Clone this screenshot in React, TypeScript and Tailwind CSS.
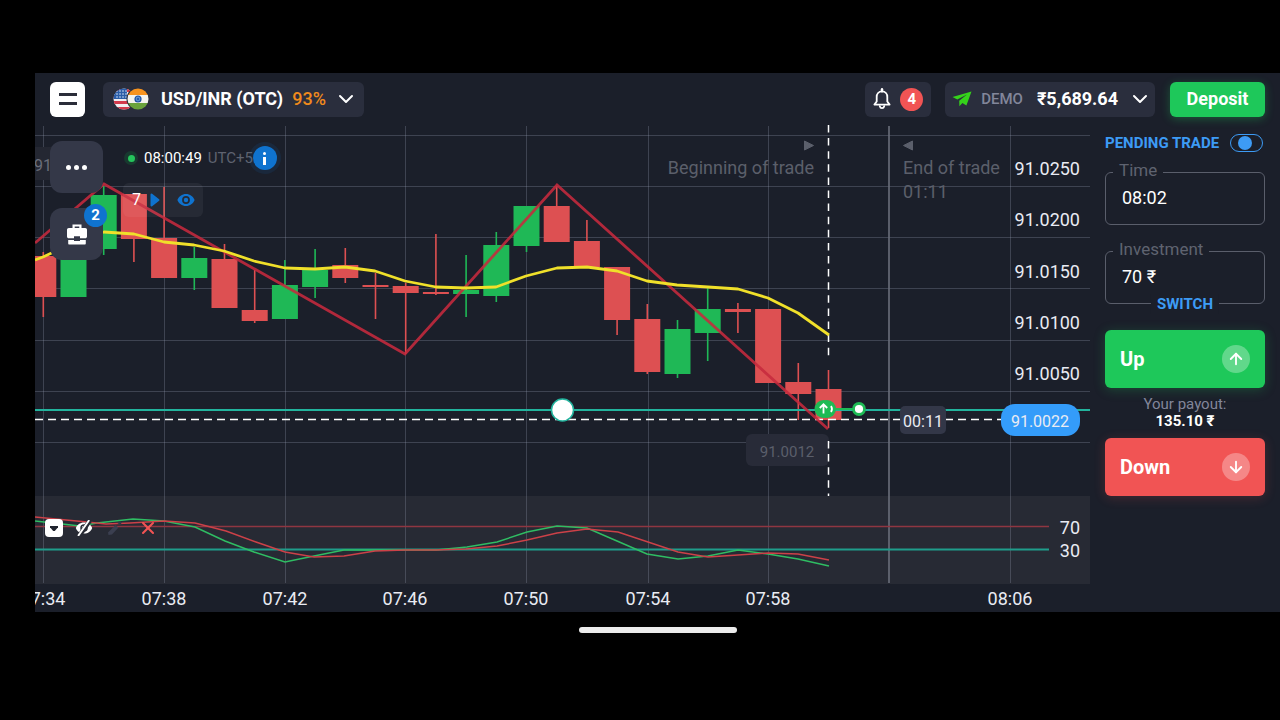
import { ArrowDown, ArrowUp, ChevronDown, X } from "lucide-react"

type Candle = { up?: boolean; high: number; top: number; bottom: number; low: number }

const STEP = 30.2
const FIRST_X = 43.3

const candles: Candle[] = [
    { high: 252, top: 256, bottom: 297, low: 317 },
    { up: true, high: 240, top: 252, bottom: 297, low: 297 },
    { up: true, high: 186, top: 195, bottom: 249, low: 255 },
    { high: 194, top: 194, bottom: 239, low: 262 },
    { high: 187, top: 238, bottom: 278, low: 278 },
    { up: true, high: 247, top: 258, bottom: 278, low: 290 },
    { high: 244, top: 259, bottom: 308, low: 308 },
    { high: 270, top: 310, bottom: 321, low: 323 },
    { up: true, high: 260, top: 285, bottom: 319, low: 319 },
    { up: true, high: 249, top: 270, bottom: 287, low: 298 },
    { high: 248, top: 265, bottom: 278, low: 283 },
    { high: 273, top: 285, bottom: 287, low: 319 },
    { high: 283, top: 286, bottom: 293, low: 354 },
    { high: 234, top: 292, bottom: 294, low: 295 },
    { up: true, high: 255, top: 290, bottom: 294, low: 317 },
    { up: true, high: 232, top: 245, bottom: 296, low: 302 },
    { up: true, high: 206, top: 206, bottom: 246, low: 252 },
    { high: 186, top: 206, bottom: 242, low: 242 },
    { high: 220, top: 241, bottom: 267, low: 267 },
    { high: 267, top: 267, bottom: 320, low: 335 },
    { high: 304, top: 319, bottom: 372, low: 374 },
    { up: true, high: 320, top: 329, bottom: 374, low: 378 },
    { up: true, high: 286, top: 309, bottom: 333, low: 361 },
    { high: 303, top: 309, bottom: 312, low: 333 },
    { high: 309, top: 309, bottom: 383, low: 383 },
    { high: 363, top: 382, bottom: 394, low: 420 },
    { high: 370, top: 389, bottom: 420, low: 428 },
]

const average =
    "35,260 43,257 73,243 104,232 134,234 164,242 194,245 224,251 254,261 285,268 315,269 345,267 375,271 405,281 436,287 466,288 496,287 526,276 557,268 587,267 617,271 647,281 677,285 708,287 738,289 768,298 798,313 829,335"

const stochFast =
    "35,521 80,526 97,523 133,519 164,521 195,527 225,541 254,552 285,562 314,556 344,550 436,550 467,547 497,542 527,532 557,526 587,528 617,541 647,554 678,559 708,556 738,550 768,554 798,559 829,566"

const stochSlow =
    "35,517 87,522 106,524 130,523 164,521 195,523 226,531 256,542 285,552 314,557 344,556 375,551 405,550 436,550 466,549 497,546 527,540 557,533 587,529 618,532 648,542 678,552 708,557 738,555 768,553 798,554 829,560"

const rows = [135, 186, 237, 288, 340, 391, 442]

const columns = [
    { x: 43, label: "07:34" },
    { x: 164, label: "07:38" },
    { x: 285, label: "07:42" },
    { x: 405, label: "07:46" },
    { x: 526, label: "07:50" },
    { x: 648, label: "07:54" },
    { x: 768, label: "07:58" },
    { x: 1010, label: "08:06" },
]

const prices = [
    { y: 168, label: "91.0250" },
    { y: 219, label: "91.0200" },
    { y: 271, label: "91.0150" },
    { y: 322, label: "91.0100" },
    { y: 373, label: "91.0050" },
]

function Flags() {
    return (
        <svg viewBox="0 0 36 22" className="h-[22px] w-9" aria-hidden="true">
            <defs>
                <clipPath id="us">
                    <circle cx="11" cy="11" r="10.5" />
                </clipPath>
                <clipPath id="in">
                    <circle cx="25" cy="11" r="10.5" />
                </clipPath>
            </defs>
            <g clipPath="url(#us)">
                <rect width="22" height="22" fill="#f1eef0" />
                {[0, 6, 12, 18].map((y) => (
                    <rect key={y} y={y + 1} width="22" height="3" fill="#d33a4c" />
                ))}
                <rect width="14" height="11" fill="#2a5da8" />
                {[3, 6, 9].map((y) =>
                    [4, 7, 10, 13].map((x) => <circle key={`${x}-${y}`} cx={x} cy={y} r="0.8" fill="#d8e4f5" />)
                )}
            </g>
            <circle cx="25" cy="11" r="11.5" fill="#2a2e3d" />
            <g clipPath="url(#in)">
                <rect x="14" width="22" height="7" fill="#f7931e" />
                <rect x="14" y="7" width="22" height="8" fill="#f3f3ee" />
                <rect x="14" y="15" width="22" height="7" fill="#6aa33c" />
            </g>
            <circle cx="25" cy="11" r="3" fill="#5c8fd0" stroke="#1c4fa0" strokeWidth="1.2" />
            <circle cx="25" cy="11" r="1" fill="#1c4fa0" />
        </svg>
    )
}

function Bell() {
    return (
        <svg viewBox="0 0 18 22" className="h-[22px] w-[18px]" fill="none" stroke="#fff" strokeWidth="1.8" strokeLinejoin="round" strokeLinecap="round" aria-hidden="true">
            <path d="M9 3.400c-3.400 0-5.300 2.500-5.300 5.500v4.600L1.400 16.600h15.200l-2.300-3.100V8.900c0-3-1.900-5.500-5.300-5.500z" />
            <path d="M9 1.300v2" strokeWidth="2.400" />
            <path d="M6.800 18.200c.3 1.300 1.100 1.900 2.200 1.900s1.900-.6 2.200-1.900" />
        </svg>
    )
}

function PaperPlane() {
    return (
        <svg viewBox="0 0 20 16" className="h-4 w-5" aria-hidden="true">
            <path d="M19.500.5L.5 6l4.800 2.600L15 3.500 7.200 9.800l.2 5.400 3-3.300 4 2.700z" fill="#35d21b" />
        </svg>
    )
}

function Briefcase() {
    return (
        <svg viewBox="0 0 22 22" className="h-[22px] w-[22px]" aria-hidden="true">
            <path d="M6.500 5V1.500h9V5h3.700C20.200 5 21 5.800 21 6.800v6.700c0 1-.8 1.800-1.800 1.800H14v-2.100H8v2.100H2.800c-1 0-1.800-.8-1.800-1.800V6.800C1 5.800 1.800 5 2.800 5zM8.700 5h4.600V3.500H8.700z" fill="#fff" fillRule="evenodd" />
            <path d="M2.200 17H8v1h6v-1h5.800v3.500c0 .5-.4 1-1 1H3.200c-.6 0-1-.5-1-1z" fill="#fff" />
        </svg>
    )
}

function Eye({ className }: { className: string }) {
    return (
        <svg viewBox="0 0 18 14" className={className} aria-hidden="true">
            <path d="M9 1C5 1 1.800 3.400.4 7c1.400 3.600 4.600 6 8.600 6s7.200-2.400 8.600-6C16.200 3.400 13 1 9 1zm0 9.900A3.900 3.900 0 1 1 9 3.100a3.900 3.900 0 0 1 0 7.800z" fill="currentColor" />
            <circle cx="9" cy="7" r="2.200" fill="currentColor" />
        </svg>
    )
}

function EyeOff() {
    return (
        <svg viewBox="0 0 18 16" className="h-4 w-[18px]" aria-hidden="true">
            <path d="M9 2.400C5 2.400 2 4.700.8 8 2 11.300 5 13.600 9 13.600s7-2.300 8.200-5.600C16 4.700 13 2.400 9 2.400z" fill="#fff" />
            <circle cx="9" cy="8" r="3" fill="none" stroke="#272a34" strokeWidth="1.500" />
            <path d="M15 .5L4.500 15.500" stroke="#272a34" strokeWidth="4.500" />
            <path d="M13.700.8L3.600 15.200" stroke="#fff" strokeWidth="2" strokeLinecap="round" />
        </svg>
    )
}

function Header() {
    return (
        <header className="flex h-[52px] items-center px-[15px]">
            <button aria-label="Menu" className="flex h-[35px] w-[35px] flex-col items-center justify-center gap-[6px] rounded-md bg-white">
                <span className="h-[3px] w-[18px] bg-[#2a2d39]" />
                <span className="h-[3px] w-[18px] bg-[#2a2d39]" />
            </button>
            <button className="ml-[18px] flex h-[35px] items-center rounded-md bg-[#2a2e3d] pl-[10px] pr-[6px]">
                <Flags />
                <span className="ml-3 text-[18px] leading-5 font-bold">USD/INR (OTC)</span>
                <span className="ml-[9px] text-[18px] leading-5 font-medium text-[#f08a1c]">93%</span>
                <ChevronDown className="ml-2 h-6 w-6" />
            </button>

            <button aria-label="Notifications" className="ml-auto flex h-[35px] items-center gap-[9px] rounded-md bg-[#2a2e3d] px-2">
                <Bell />
                <span className="flex h-[23px] w-[23px] items-center justify-center rounded-full bg-[#f15454] text-[15px] font-bold">4</span>
            </button>
            <button className="ml-[14px] flex h-[35px] items-center rounded-md bg-[#2a2e3d] pl-[7px] pr-[3px]">
                <PaperPlane />
                <span className="ml-[9px] text-[15px] leading-5 font-medium text-[#82869a]">DEMO</span>
                <span className="ml-[14px] text-[18px] leading-5 font-bold">₹5,689.64</span>
                <ChevronDown className="ml-[10px] h-6 w-6" />
            </button>
            <button className="ml-[15px] h-[35px] w-[95px] rounded-md bg-[#1ec85a] text-[18px] leading-5 font-bold shadow-[0_2px_10px_#1ec85a55]">
                Deposit
            </button>
        </header>
    )
}

function PriceChart() {
    return (
        <svg viewBox="35 125 1055 487" className="block w-full" role="img" aria-label="USD/INR chart" fontSize="18" fill="#e9ebf3">
            <rect x="35" y="496" width="1055" height="88" fill="#272a34" />

            {/* Grid */}
            <g stroke="#9aa2b8" strokeOpacity="0.28">
                {rows.map((y) => (
                    <line key={y} x1="35" x2="1090" y1={y + 0.5} y2={y + 0.5} />
                ))}
                {columns.map(({ x }) => (
                    <line key={x} x1={x + 0.5} x2={x + 0.5} y1="126" y2="583" />
                ))}
            </g>
            <line x1="889" x2="889" y1="126" y2="583" stroke="#6a6e7a" strokeWidth="2" strokeOpacity="0.8" />

            {/* Trade hints */}
            <g fill="#5b5f6b">
                <path d="M804.500 141l9 4.500-9 4.500z" stroke="#5b5f6b" strokeLinejoin="round" />
                <path d="M912.500 141l-9 4.500 9 4.500z" stroke="#5b5f6b" strokeLinejoin="round" />
                <text x="814" y="174" textAnchor="end">Beginning of trade</text>
                <text x="903" y="174">End of trade</text>
                <text x="903" y="198">01:11</text>
            </g>
            <rect x="746" y="434" width="83" height="32" rx="6" fill="#282b38" />
            <text x="787" y="457" fontSize="15" textAnchor="middle" fill="#5b5f6b">91.0012</text>
            <rect x="30" y="147" width="60" height="33" rx="6" fill="#242732" />
            <text x="34" y="171" fontSize="16" fill="#6a6e7a">91.0263</text>

            <path d="M828.500 125V357M828.500 441V496" stroke="#fff" strokeWidth="1.500" strokeDasharray="7.500 5.600" />

            {/* Candles */}
            {candles.map((c, i) => {
                const x = FIRST_X + i * STEP
                return (
                    <g key={i} fill={c.up ? "#1fb856" : "#dd5052"}>
                        <rect x={x - 0.8} y={c.high} width="1.6" height={c.low - c.high} />
                        <rect x={x - 13} y={c.top} width="26" height={c.bottom - c.top} />
                    </g>
                )
            })}

            <path d="M35 419.500H1001" stroke="#fff" strokeWidth="1.500" strokeDasharray="8 5" />
            <path d="M35 410H1090" stroke="#22b39d" strokeWidth="1.800" />
            <polyline points="35,243 104,184 405,354 557,185 828,429" fill="none" stroke="#c62a3e" strokeOpacity="0.88" strokeWidth="2.800" />
            <polyline points={average} fill="none" stroke="#f0e02a" strokeWidth="2.800" strokeLinejoin="round" />

            {/* Open trade */}
            <circle cx="562.500" cy="410" r="11" fill="#fff" stroke="#22b39d" strokeWidth="1.500" />
            <path d="M834 409H854" stroke="#1ebb55" strokeWidth="2" />
            <circle cx="827" cy="409" r="9" fill="#1ebb55" />
            <circle cx="823.500" cy="409" r="9" fill="#1ebb55" />
            <path d="M823.500 413.500v-9M819.800 408l3.700-3.700 3.700 3.700M831 406c1.300 2 1.300 4 0 6" fill="none" stroke="#fff" strokeWidth="1.800" />
            <circle cx="859" cy="409" r="5.500" fill="#fff" stroke="#1ebb55" strokeWidth="2.800" />
            <rect x="900" y="406" width="46" height="28" rx="5" fill="#333748" />
            <text x="923" y="427" fontSize="16" textAnchor="middle">00:11</text>
            <rect x="1001" y="404" width="79" height="32" rx="14" fill="#349cfa" />
            <text x="1040" y="427" fontSize="16" textAnchor="middle">91.0022</text>

            {/* Oscillator */}
            <path d="M35 526.500H1049" stroke="#8f3641" strokeWidth="1.500" />
            <path d="M35 549.500H1049" stroke="#1f9d8b" strokeWidth="1.800" />
            <polyline points={stochFast} fill="none" stroke="#2fbd63" strokeWidth="1.500" />
            <polyline points={stochSlow} fill="none" stroke="#cc4148" strokeWidth="1.500" />

            {/* Axis labels */}
            {prices.map(({ y, label }) => (
                <text key={label} x="1080" y={y + 7} textAnchor="end">{label}</text>
            ))}
            <text x="1080" y="534" textAnchor="end">70</text>
            <text x="1080" y="557" textAnchor="end">30</text>
            {columns.map(({ x, label }) => (
                <text key={label} x={x} y="605" textAnchor="middle">{label}</text>
            ))}
        </svg>
    )
}

function ChartTools() {
    return (
        <>
            <div className="absolute left-[15px] top-4 flex flex-col gap-[15px]">
                <button aria-label="More" className="flex h-[52px] w-[53px] items-center justify-center gap-[3px] rounded-xl bg-[#343848]">
                    <span className="h-[5px] w-[5px] rounded-full bg-white" />
                    <span className="h-[5px] w-[5px] rounded-full bg-white" />
                    <span className="h-[5px] w-[5px] rounded-full bg-white" />
                </button>
                <button aria-label="Trades" className="relative flex h-[52px] w-[53px] items-center justify-center rounded-xl bg-[#343848]">
                    <Briefcase />
                    <span className="absolute -right-1 -top-1 flex h-[23px] w-[23px] items-center justify-center rounded-full bg-[#0f73cf] text-[15px] font-bold">2</span>
                </button>
            </div>

            <div className="absolute left-[89px] top-[21px] flex h-6 items-center text-[15px]">
                <span className="flex h-[14px] w-[14px] items-center justify-center rounded-full bg-[#18392f]">
                    <span className="h-[7px] w-[7px] rounded-full bg-[#25c45c]" />
                </span>
                <span className="ml-[6px]">08:00:49</span>
                <span className="ml-[6px] whitespace-nowrap text-[#5f6370]">UTC+5:</span>
                <button aria-label="Info" className="-ml-1 flex h-6 w-6 flex-col items-center justify-center gap-[2px] rounded-full bg-[#0f73cf] shadow-[0_0_0_4px_#0f73cf1c]">
                    <span className="h-[3px] w-[3px] rounded-full bg-white" />
                    <span className="h-2 w-[3px] bg-white" />
                </button>
            </div>

            <div className="absolute left-[88px] top-[58px] flex h-[34px] w-20 items-center rounded-md bg-white/5 pl-[9px] text-[16px] text-[#0f73cf]">
                <span className="text-white">7</span>
                <svg viewBox="0 0 10 14" className="ml-[9px] h-[14px] w-[10px] shrink-0" aria-hidden="true">
                    <path d="M1.500 1.500l7 5.500-7 5.500z" fill="currentColor" stroke="currentColor" strokeWidth="2" strokeLinejoin="round" />
                </svg>
                <button aria-label="Toggle indicator" className="ml-[17px]">
                    <Eye className="h-[14px] w-[18px]" />
                </button>
            </div>

            <div className="absolute left-[10px] top-[394px] flex h-[18px] items-center">
                <button aria-label="Collapse" className="flex h-[18px] w-[18px] items-center justify-center rounded bg-white">
                    <svg viewBox="0 0 8 5" className="h-[5px] w-2" aria-hidden="true">
                        <path d="M0 0h8v1.200L4.800 5H3.200L0 1.200z" fill="#20232e" />
                    </svg>
                </button>
                <button aria-label="Hide" className="ml-3">
                    <EyeOff />
                </button>
                <button aria-label="Edit" className="ml-[14px]">
                    <svg viewBox="0 0 16 16" className="h-4 w-4" aria-hidden="true">
                        <path d="M1 12.500L8.500 5l3 2.500L5 14.500 1.500 15z" fill="#3b3f50" />
                        <path d="M10.500 3l1.500-1.500 3 1L13 5z" fill="#343848" />
                    </svg>
                </button>
                <button aria-label="Remove" className="ml-[15px]">
                    <X className="h-5 w-5 text-[#f15454]" strokeWidth={2.5} />
                </button>
            </div>
        </>
    )
}

function Field({ id, label, value }: { id: string; label: string; value: string }) {
    return (
        <div className="relative">
            <label htmlFor={id} className="absolute -top-3 left-2 bg-[#1b1f2a] px-[6px] text-[17px] leading-5 text-[#5f6370]">
                {label}
            </label>
            <input id={id} defaultValue={value} className="block h-[53px] w-full rounded-md border border-[#5a5e6b] bg-transparent px-4 pb-[3px] text-[18px] outline-none" />
        </div>
    )
}

function TradePanel() {
    return (
        <aside className="w-[190px] shrink-0 px-[15px] pt-2">
            <label className="flex h-5 items-center justify-between pr-[2px] text-[15px] font-bold text-[#3d9bf5]">
                PENDING TRADE
                <input
                    type="checkbox"
                    className="relative h-[18px] w-[33px] appearance-none rounded-full border border-[#3d9bf5] before:absolute before:left-[7px] before:top-[1px] before:h-[14px] before:w-[14px] before:rounded-full before:bg-[#3d9bf5]"
                />
            </label>

            <div className="mt-[19px]">
                <Field id="time" label="Time" value="08:02" />
            </div>
            <div className="relative mt-[26px]">
                <Field id="investment" label="Investment" value="70 ₹" />
                <button className="absolute -bottom-[10px] left-1/2 -translate-x-1/2 bg-[#1b1f2a] px-[6px] text-[15px] font-bold leading-5 text-[#3d9bf5]">
                    SWITCH
                </button>
            </div>

            <button className="mt-[26px] flex h-[58px] w-full items-center justify-between rounded-md bg-[#1ec85a] px-[15px] text-[20px] font-bold shadow-[0_2px_12px_#1ec85a40]">
                Up
                <span className="flex h-7 w-7 items-center justify-center rounded-full bg-white/30">
                    <ArrowUp className="h-[18px] w-[18px]" strokeWidth={2.5} />
                </span>
            </button>
            <p className="my-2 text-center text-[15px] leading-[17px]">
                <span className="block text-[#82869a]">Your payout:</span>
                <strong className="block">135.10 ₹</strong>
            </p>
            <button className="flex h-[58px] w-full items-center justify-between rounded-md bg-[#f15454] px-[15px] text-[20px] font-bold shadow-[0_2px_12px_#f1545433]">
                Down
                <span className="flex h-7 w-7 items-center justify-center rounded-full bg-white/30">
                    <ArrowDown className="h-[18px] w-[18px]" strokeWidth={2.5} />
                </span>
            </button>
        </aside>
    )
}

export default function App() {
    return (
        <div className="min-h-screen bg-black pl-[35px] pt-[73px] font-[Roboto,sans-serif] text-white">
            <div className="bg-[#1b1f2a]">
                <Header />
                <div className="flex">
                    <main className="relative min-w-0 flex-1">
                        <PriceChart />
                        <ChartTools />
                    </main>
                    <TradePanel />
                </div>
            </div>
            <div className="mx-auto mt-[15px] h-[6px] w-[158px] rounded-full bg-[#ececec]" />
        </div>
    )
}
